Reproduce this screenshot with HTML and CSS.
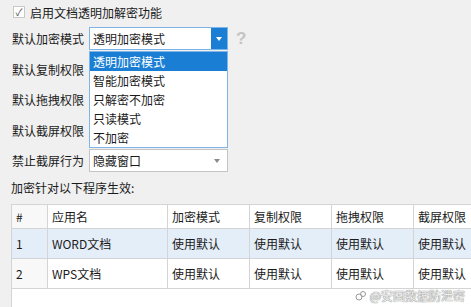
FILE: index.html
```html
<!DOCTYPE html>
<html>
<head>
    <title>加密设置</title>
    <link rel="stylesheet" href="styles.css">
</head>
<body>
    <div class="panel">
        <label class="check-row">
            <span class="check-box">&#10003;</span>
            <span>启用文档透明加解密功能</span>
        </label>

        <div class="form">
            <div class="form-row">
                <span class="form-label">默认加密模式</span>
                <div class="combo active">
                    <span class="combo-text">透明加密模式</span>
                    <span class="combo-btn"><span class="arrow"></span></span>
                    <ul class="dropdown">
                        <li class="selected">透明加密模式</li>
                        <li>智能加密模式</li>
                        <li>只解密不加密</li>
                        <li>只读模式</li>
                        <li>不加密</li>
                    </ul>
                </div>
                <span class="help">?</span>
            </div>
            <div class="form-row">
                <span class="form-label">默认复制权限</span>
            </div>
            <div class="form-row">
                <span class="form-label">默认拖拽权限</span>
            </div>
            <div class="form-row">
                <span class="form-label">默认截屏权限</span>
            </div>
            <div class="form-row">
                <span class="form-label">禁止截屏行为</span>
                <div class="combo">
                    <span class="combo-text">隐藏窗口</span>
                    <span class="combo-btn plain"><span class="arrow"></span></span>
                </div>
            </div>
        </div>

        <p class="caption">加密针对以下程序生效:</p>

        <div class="table-wrap">
            <table class="app-table">
                <thead>
                    <tr>
                        <th class="col-num">#</th>
                        <th class="col-name">应用名</th>
                        <th class="col-mode">加密模式</th>
                        <th class="col-mode">复制权限</th>
                        <th class="col-mode">拖拽权限</th>
                        <th class="col-last">截屏权限</th>
                    </tr>
                </thead>
                <tbody>
                    <tr class="row-selected">
                        <td class="col-num">1</td>
                        <td>WORD文档</td>
                        <td>使用默认</td>
                        <td>使用默认</td>
                        <td>使用默认</td>
                        <td>使用默认</td>
                    </tr>
                    <tr>
                        <td class="col-num">2</td>
                        <td>WPS文档</td>
                        <td>使用默认</td>
                        <td>使用默认</td>
                        <td>使用默认</td>
                        <td>使用默认</td>
                    </tr>
                </tbody>
            </table>
            <div class="watermark">
                <svg class="wm-icon" width="12" height="12" viewBox="0 0 12 12">
                    <circle cx="4" cy="7" r="3" fill="none" stroke="#999" stroke-width="1"/>
                    <circle cx="8" cy="4" r="2.5" fill="none" stroke="#999" stroke-width="1"/>
                </svg>
                <span>@安固数据防泄密</span>
            </div>
        </div>
    </div>
</body>
</html>
```

FILE: styles.css
```css
html, body {
    margin: 0;
    height: 100%;
    overflow: hidden;
}

body {
    background-color: #f0f0f0;
    font-family: "Noto Sans CJK SC", "Liberation Sans", sans-serif;
    font-size: 12px;
    color: #1a1a1a;
}

.panel {
    padding: 5px 0 0 0;
}

.check-row {
    display: flex;
    align-items: center;
    height: 14px;
    padding-left: 13px;
    gap: 5px;
}

.check-box {
    width: 10px;
    height: 10px;
    border: 1px solid #c8c8c8;
    background-color: #fff;
    font-size: 10px;
    line-height: 10px;
    text-align: center;
    color: #444;
}

.form {
    display: flex;
    flex-direction: column;
    gap: 7.5px;
    margin-top: 8px;
}

.form-row {
    display: flex;
    align-items: center;
    height: 23px;
    padding-left: 12px;
}

.form-label {
    width: 77px;
    flex-shrink: 0;
}

.combo {
    position: relative;
    width: 137px;
    height: 21px;
    border: 1px solid #c4c4c4;
    background-color: #fff;
    display: flex;
    align-items: center;
}

.combo.active {
    border-color: #7fb4e6;
}

.combo-text {
    flex: 1;
    padding-left: 3px;
}

.combo-btn {
    width: 16px;
    height: 21px;
    background-color: #1a7fd4;
    display: flex;
    align-items: center;
    justify-content: center;
}

.combo-btn.plain {
    background-color: transparent;
    margin-right: 2px;
}

.arrow {
    width: 0;
    height: 0;
    border-left: 3px solid transparent;
    border-right: 3px solid transparent;
    border-top: 4px solid #fff;
}

.combo-btn.plain .arrow {
    border-top-color: #8a8a8a;
}

.dropdown {
    position: absolute;
    left: -1px;
    top: 23px;
    width: 137px;
    margin: 0;
    padding: 0;
    list-style: none;
    background-color: #fff;
    border: 1px solid #7fb4e6;
    z-index: 2;
}

.dropdown li {
    height: 19px;
    line-height: 19px;
    padding-left: 3px;
}

.dropdown li.selected {
    background-color: #1a7fd4;
    color: #fff;
}

.help {
    margin-left: 8px;
    font-family: "Liberation Sans", sans-serif;
    font-size: 17px;
    font-weight: bold;
    color: #c4c4c4;
}

.caption {
    margin: 8px 0 0 11px;
    height: 16px;
    line-height: 16px;
}

.table-wrap {
    position: relative;
    margin: 8px 0 0 11px;
    height: 103px;
    overflow: hidden;
    background-color: #fff;
    border-left: 1px solid #d4d4d4;
    border-top: 1px solid #d4d4d4;
}

.app-table {
    border-collapse: collapse;
    table-layout: fixed;
    width: 500px;
}

.app-table th,
.app-table td {
    text-align: left;
    font-weight: normal;
    padding: 0 0 0 4px;
    border-right: 1px solid #d4d4d4;
    border-bottom: 1px solid #d4d4d4;
    white-space: nowrap;
    overflow: hidden;
}

.app-table th {
    height: 23px;
}

.app-table td {
    height: 29px;
}

.app-table .col-num {
    width: 31px;
    background-color: #f8f8f8;
}

.app-table .col-name {
    width: 115px;
}

.app-table .col-mode {
    width: 77px;
}

.row-selected td,
.row-selected td.col-num {
    background-color: #e4eef9;
}

.watermark {
    position: absolute;
    right: 6px;
    bottom: 5px;
    display: flex;
    align-items: center;
    gap: 3px;
    font-size: 12px;
    line-height: 14px;
    color: rgba(255, 255, 255, 0.9);
    text-shadow: 0 0 1px #777, 0 0 1px #777;
}
```
